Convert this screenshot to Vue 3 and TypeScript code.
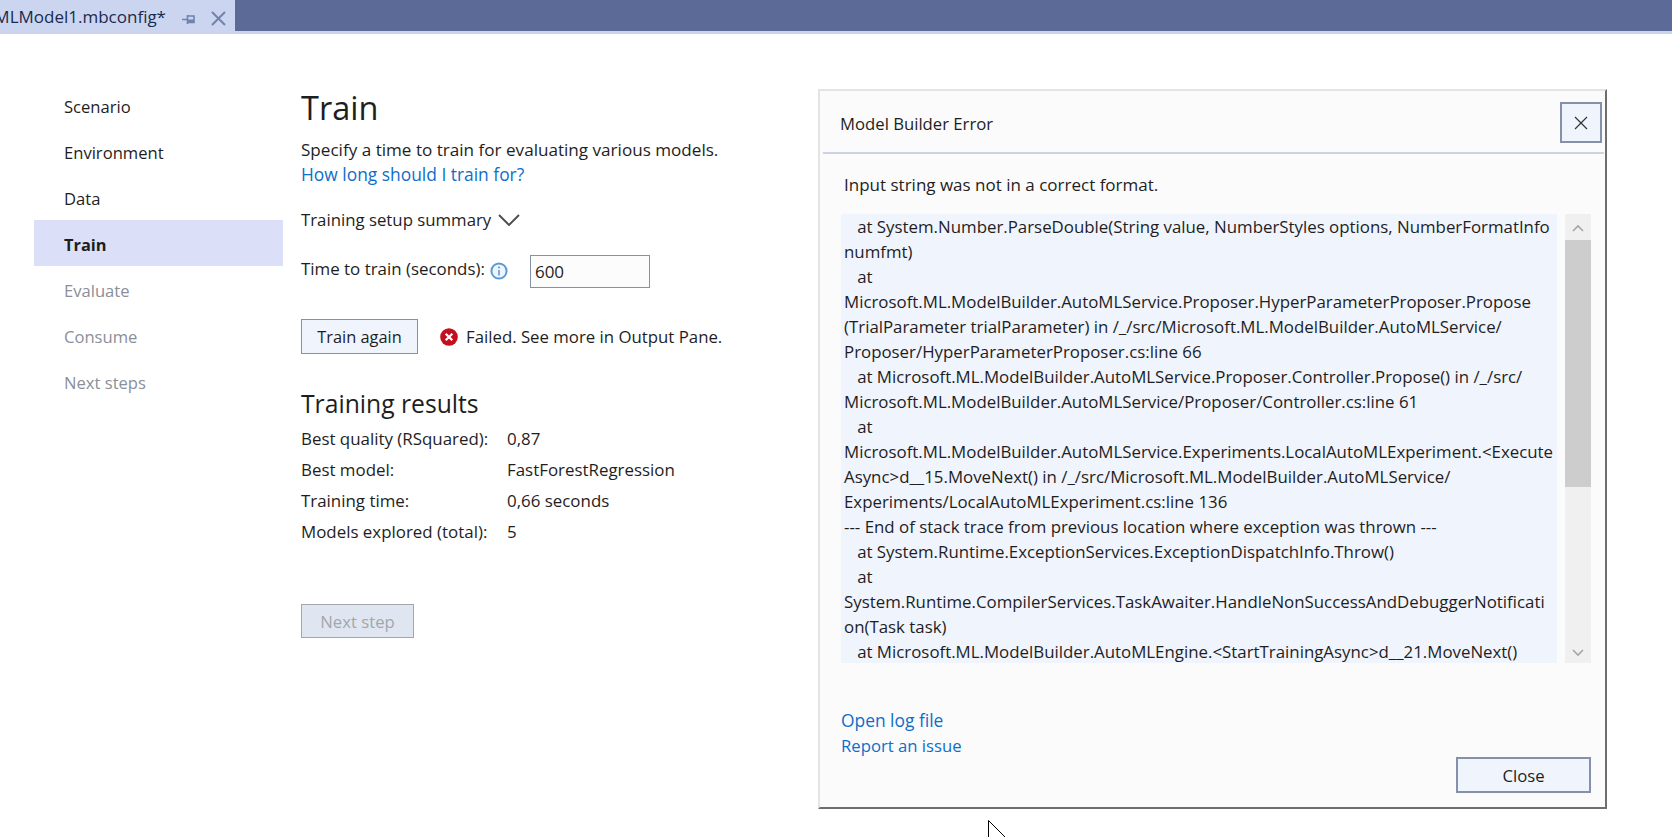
<script setup lang="ts">
const navItems = [
  { label: 'Scenario', state: '' },
  { label: 'Environment', state: '' },
  { label: 'Data', state: '' },
  { label: 'Train', state: 'active' },
  { label: 'Evaluate', state: 'off' },
  { label: 'Consume', state: 'off' },
  { label: 'Next steps', state: 'off' },
]
const results = [
  ['Best quality (RSquared):', '0,87'],
  ['Best model:', 'FastForestRegression'],
  ['Training time:', '0,66 seconds'],
  ['Models explored (total):', '5'],
]
const trace = [
  '   at System.Number.ParseDouble(String value, NumberStyles options, NumberFormatInfo',
  'numfmt)',
  '   at',
  'Microsoft.ML.ModelBuilder.AutoMLService.Proposer.HyperParameterProposer.Propose',
  '(TrialParameter trialParameter) in /_/src/Microsoft.ML.ModelBuilder.AutoMLService/',
  'Proposer/HyperParameterProposer.cs:line 66',
  '   at Microsoft.ML.ModelBuilder.AutoMLService.Proposer.Controller.Propose() in /_/src/',
  'Microsoft.ML.ModelBuilder.AutoMLService/Proposer/Controller.cs:line 61',
  '   at',
  'Microsoft.ML.ModelBuilder.AutoMLService.Experiments.LocalAutoMLExperiment.<Execute',
  'Async>d__15.MoveNext() in /_/src/Microsoft.ML.ModelBuilder.AutoMLService/',
  'Experiments/LocalAutoMLExperiment.cs:line 136',
  '--- End of stack trace from previous location where exception was thrown ---',
  '   at System.Runtime.ExceptionServices.ExceptionDispatchInfo.Throw()',
  '   at',
  'System.Runtime.CompilerServices.TaskAwaiter.HandleNonSuccessAndDebuggerNotificati',
  'on(Task task)',
  '   at Microsoft.ML.ModelBuilder.AutoMLEngine.<StartTrainingAsync>d__21.MoveNext()',
]
</script>

<template>
  <div class="app">
    <header class="tabbar">
      <div class="tab">
        <span class="tab-name">MLModel1.mbconfig*</span>
        <svg class="pin" width="14" height="12" viewBox="0 0 14 12" fill="none" stroke="#6f83ad" stroke-width="1.6">
          <path d="M0 5.5h5M5.5 1v9M5.5 2h6.5v6.5H5.5" />
          <path d="M6 7h6" stroke-width="3" />
        </svg>
        <svg class="tab-x" width="15" height="15" viewBox="0 0 15 15" fill="none" stroke="#6f83ad" stroke-width="2">
          <path d="M1 1l13 13M14 1L1 14" />
        </svg>
      </div>
    </header>

    <div class="page">
      <nav class="nav">
        <div v-for="item in navItems" :key="item.label" class="nav-item" :class="item.state">{{ item.label }}</div>
      </nav>

      <main class="main">
        <h1 class="title">Train</h1>
        <p class="line">Specify a time to train for evaluating various models.</p>
        <a class="link how">How long should I train for?</a>
        <div class="summary">
          <span>Training setup summary</span>
          <svg width="22" height="12" viewBox="0 0 22 12" fill="none" stroke="#4d4d4d" stroke-width="1.9">
            <path d="M1 1l10 10L21 1" />
          </svg>
        </div>
        <div class="time-row">
          <span class="time-label">Time to train (seconds):</span>
          <svg class="info" width="18" height="18" viewBox="0 0 18 18" fill="#eef5fc">
            <circle cx="9" cy="9" r="7.6" stroke="#5b9bd5" stroke-width="2" />
            <path d="M9 8v5.5" stroke="#5b9bd5" stroke-width="1.6" />
            <circle cx="9" cy="5.4" r="1" fill="#5b9bd5" />
          </svg>
          <div class="input">600</div>
        </div>
        <div class="train-row">
          <button class="btn train-btn">Train again</button>
          <svg class="err" width="18" height="18" viewBox="0 0 18 18">
            <circle cx="9" cy="9" r="8.8" fill="#c50f1f" />
            <path d="M5.7 5.7l6.6 6.6M12.3 5.7l-6.6 6.6" stroke="#fff" stroke-width="2.2" />
          </svg>
          <span>Failed. See more in Output Pane.</span>
        </div>
        <h2 class="subtitle">Training results</h2>
        <div class="results">
          <template v-for="row in results" :key="row[0]">
            <span>{{ row[0] }}</span>
            <span>{{ row[1] }}</span>
          </template>
        </div>
        <button class="next-btn">Next step</button>
      </main>

      <section class="dialog">
        <div class="dialog-head">
          <span class="dialog-title">Model Builder Error</span>
          <button class="dialog-x" aria-label="Close">
            <svg width="14" height="14" viewBox="0 0 14 14" fill="none" stroke="#333" stroke-width="1.2">
              <path d="M1 1l12 12M13 1L1 13" />
            </svg>
          </button>
        </div>
        <p class="dialog-msg">Input string was not in a correct format.</p>
        <div class="trace-row">
          <div class="trace">
            <div v-for="(l, i) in trace" :key="i" class="trace-line">{{ l }}</div>
          </div>
          <div class="scroll">
            <svg class="arrow up" width="12" height="8" viewBox="0 0 12 8" fill="none" stroke="#a6a6a6" stroke-width="1.6">
              <path d="M1 7l5-5 5 5" />
            </svg>
            <div class="thumb"></div>
            <div class="track"></div>
            <svg class="arrow down" width="12" height="8" viewBox="0 0 12 8" fill="none" stroke="#a6a6a6" stroke-width="1.6">
              <path d="M1 1l5 5 5-5" />
            </svg>
          </div>
        </div>
        <div class="dialog-links">
          <a class="link open-log">Open log file</a>
          <a class="link report">Report an issue</a>
        </div>
        <div class="dialog-foot">
          <button class="btn close-btn">Close</button>
        </div>
      </section>
    </div>

    <svg class="cursor" width="20" height="18" viewBox="0 0 20 18" fill="#fff" stroke="#000" stroke-width="1">
      <path d="M0.5 0.5V18M0.5 0.5L17 17" />
    </svg>
  </div>
</template>

<style scoped>
.app {
  position: relative;
  width: 1672px;
  height: 837px;
  overflow: hidden;
  background: #fff;
  color: #1e1e1e;
  font-family: "Open Sans", "Noto Sans", sans-serif;
  font-size: 16.7px;
  line-height: 25px;
}
.tabbar {
  height: 34px;
  background: linear-gradient(#5c6a97 31px, #ccd5f0 31px);
}
.tab {
  width: 235px;
  height: 34px;
  box-sizing: border-box;
  background: #ccd5f0;
  display: flex;
  align-items: center;
  overflow: hidden;
  position: relative;
  color: #1b2a4e;
  padding-left: 167px;
}
.tab-name {
  position: absolute;
  right: 69px;
  top: 4px;
  white-space: nowrap;
  font-size: 17px;
}
.pin { margin: 5px 0 0 15px; }
.tab-x { margin: 2px 0 0 15px; }
.page {
  display: flex;
  align-items: flex-start;
}
.nav {
  width: 249px;
  margin: 48px 0 0 34px;
  flex: none;
}
.nav-item {
  height: 46px;
  line-height: 50px;
  padding-left: 30px;
  font-size: 16.6px;
}
.nav-item.active { background: #dbe0f8; font-weight: 700; color: #1e1e1e; font-size: 16.4px; }
.nav-item.off { color: #8a8f98; }
.main {
  width: 535px;
  flex: none;
  padding: 49px 0 0 18px;
  box-sizing: border-box;
  display: flex;
  flex-direction: column;
  align-items: flex-start;
}
.title {
  margin: 0;
  font-size: 32.5px;
  line-height: 50px;
  font-weight: 400;
}
.line { margin: 4px 0 0; height: 25px; font-size: 17.1px; }
.link { color: #0e6ec9; display: block; }
.how { font-size: 17.4px; }
.open-log { font-size: 17.4px; }
.report { font-size: 16.7px; }
.summary {
  margin-top: 20px;
  display: flex;
  align-items: center;
  gap: 7px;
  font-size: 16.8px;
}
.time-row {
  margin-top: 23px;
  display: flex;
  align-items: flex-start;
  height: 33px;
  font-size: 16.9px;
}
.time-label { margin-top: 1px; }
.info { margin: 7px 0 0 5px; }
.input {
  margin-left: 22px;
  width: 120px;
  height: 33px;
  box-sizing: border-box;
  border: 1px solid #8591a8;
  line-height: 32px;
  padding-left: 4px;
  background: #fcfcfc;
  font-size: 17px;
}
.train-row {
  margin-top: 31px;
  display: flex;
  align-items: center;
  font-size: 16.8px;
}
.btn {
  font: inherit;
  color: inherit;
  background: #f0f4fd;
  padding: 0;
  box-sizing: border-box;
}
.train-btn {
  width: 117px;
  height: 35px;
  border: 1px solid #8591a8;
  font-size: 16.4px;
}
.err { margin: 0 8px 0 22px; }
.subtitle {
  margin: 32px 0 0;
  font-size: 24.7px;
  font-weight: 400;
  line-height: 36px;
}
.results {
  margin-top: 1px;
  display: grid;
  grid-template-columns: 206px auto;
  grid-auto-rows: 31px;
  align-items: center;
  font-size: 16.9px;
}
.next-btn {
  margin-top: 57px;
  width: 113px;
  height: 34px;
  font: inherit;
  padding: 0;
  background: #dfe6f1;
  border: 1px solid #a3a6ab;
  color: #a3a6ab;
}
.dialog {
  width: 789px;
  height: 720px;
  flex: none;
  box-sizing: border-box;
  margin-top: 55px;
  background: #fbfbfb;
  border: 2px solid #e4e4e4;
  border-right-color: #6e6e6e;
  border-bottom-color: #6e6e6e;
  display: flex;
  flex-direction: column;
}
.dialog-head {
  height: 61px;
  margin: 0 1px 0 3px;
  border-bottom: 2px solid #cdd3e2;
  display: flex;
  justify-content: space-between;
  align-items: center;
  padding: 0 2px 0 17px;
  flex: none;
}
.dialog-title { margin-top: 4px; }
.dialog-x {
  width: 42px;
  height: 41px;
  margin-top: 2px;
  box-sizing: border-box;
  background: #f0f4fd;
  border: 2px solid #8591a8;
  padding: 0;
  display: flex;
  align-items: center;
  justify-content: center;
}
.dialog-msg {
  margin: 18px 0 0 24px;
  line-height: 25px;
  font-size: 17px;
}
.trace-row {
  margin: 17px 0 0 21px;
  display: flex;
  height: 449px;
}
.trace {
  width: 716px;
  padding-left: 3px;
  background: #f0f4fd;
  box-sizing: border-box;
  overflow: hidden;
  font-size: 16.85px;
}
.trace-line {
  height: 25px;
  white-space: pre;
}
.scroll {
  width: 26px;
  margin-left: 8px;
  background: #f0f0f0;
  display: flex;
  flex-direction: column;
  align-items: center;
}
.arrow { flex: none; }
.arrow.up { margin: 10px 0 8px; }
.arrow.down { margin: 12px 0 6px; }
.thumb { width: 100%; height: 247px; background: #cdcdcd; }
.track { flex: 1; }
.dialog-links {
  margin: 45px 0 0 21px;
}
.dialog-foot {
  display: flex;
  justify-content: flex-end;
  padding: 0 14px 0 0;
  margin-top: -1px;
}
.close-btn {
  width: 135px;
  height: 36px;
  border: 2px solid #8591a8;
}
.cursor {
  position: absolute;
  left: 988px;
  top: 820px;
}
</style>
